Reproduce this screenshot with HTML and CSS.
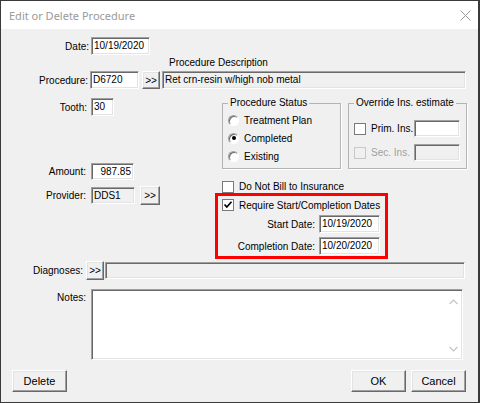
FILE: index.html
```html
<!DOCTYPE html>
<html lang="en">
<head>
  <meta charset="UTF-8" />
  <title>Edit or Delete Procedure</title>
  <link rel="stylesheet" href="styles.css">
</head>
<body>
  <div class="window">
    <!-- Title bar -->
    <div class="titlebar">
      <span class="title">Edit or Delete Procedure</span>
      <svg class="close" width="11" height="11" viewBox="0 0 11 11">
        <path d="M0.5 0.5 L10.5 10.5 M10.5 0.5 L0.5 10.5" stroke="#9a9a9a" stroke-width="1" fill="none" />
      </svg>
    </div>

    <div class="content">
      <div class="row row-date">
        <span class="lbl">Date:</span>
        <div class="field w-date">10/19/2020</div>
      </div>

      <div class="desc-caption">Procedure Description</div>
      <div class="row row-proc">
        <span class="lbl lbl-proc">Procedure:</span>
        <div class="field w-code">D6720</div>
        <div class="btn btn-pick">&gt;&gt;</div>
        <div class="field readonly w-desc">Ret crn-resin w/high nob metal</div>
      </div>

      <div class="mid">
        <div class="mid-left">
          <div class="row row-tooth">
            <span class="lbl lbl-tooth">Tooth:</span>
            <div class="field w-tooth">30</div>
          </div>
          <div class="row row-amount">
            <span class="lbl lbl-amount">Amount:</span>
            <div class="field w-amount">987.85</div>
          </div>
          <div class="row row-provider">
            <span class="lbl lbl-amount">Provider:</span>
            <div class="field readonly w-provider">DDS1</div>
            <div class="btn btn-prov">&gt;&gt;</div>
          </div>
        </div>

        <div class="mid-right">
          <div class="groups">
            <fieldset class="group group-status">
              <legend>Procedure Status</legend>
              <div class="radio-row"><span class="radio"></span>Treatment Plan</div>
              <div class="radio-row"><span class="radio on"></span>Completed</div>
              <div class="radio-row"><span class="radio"></span>Existing</div>
            </fieldset>
            <fieldset class="group group-override">
              <legend>Override Ins. estimate</legend>
              <div class="ins-row">
                <span class="chk"></span>Prim. Ins.
                <div class="field w-ins"></div>
              </div>
              <div class="ins-row disabled">
                <span class="chk"></span>Sec. Ins.
                <div class="field readonly w-ins"></div>
              </div>
            </fieldset>
          </div>

          <div class="check-row nobill"><span class="chk"></span>Do Not Bill to Insurance</div>

          <div class="highlight">
            <div class="check-row">
              <span class="chk">
                <svg width="10" height="10" viewBox="0 0 10 10">
                  <path d="M1.5 4.5 L3.8 7 L8.5 1.8" stroke="#000" stroke-width="1.7" fill="none" />
                </svg>
              </span>Require Start/Completion Dates
            </div>
            <div class="date-row">
              <span class="date-lbl">Start Date:</span>
              <div class="field w-date2">10/19/2020</div>
            </div>
            <div class="date-row">
              <span class="date-lbl">Completion Date:</span>
              <div class="field w-date2">10/20/2020</div>
            </div>
          </div>
        </div>
      </div>

      <div class="row row-diag">
        <span class="lbl lbl-diag">Diagnoses:</span>
        <div class="btn btn-diag">&gt;&gt;</div>
        <div class="field readonly w-diag"></div>
      </div>

      <div class="row row-notes">
        <span class="lbl lbl-notes">Notes:</span>
        <div class="field notes">
          <div class="notes-text"></div>
          <div class="scroll">
            <svg width="9" height="6" viewBox="0 0 9 6"><path d="M0.5 5 L4.5 1 L8.5 5" stroke="#c4c4c4" stroke-width="1.2" fill="none" /></svg>
            <svg width="9" height="6" viewBox="0 0 9 6"><path d="M0.5 1 L4.5 5 L8.5 1" stroke="#c4c4c4" stroke-width="1.2" fill="none" /></svg>
          </div>
        </div>
      </div>

      <div class="actions">
        <div class="btn btn-act">Delete</div>
        <div class="actions-right">
          <div class="btn btn-act">OK</div>
          <div class="btn btn-act">Cancel</div>
        </div>
      </div>
    </div>
  </div>
</body>
</html>
```

FILE: styles.css
```css
* { box-sizing: border-box; margin: 0; padding: 0; }
body {
  background: #f0f0f0;
  font-family: "Liberation Sans", Arial, sans-serif;
  font-size: 10px;
  color: #000;
}

/* Window frame */
.window {
  width: 480px;
  height: 403px;
  border: 1px solid #3a3a3a;
  border-right-width: 2px;
  background: #f0f0f0;
  display: flex;
  flex-direction: column;
}
.titlebar {
  height: 28px;
  background: #fff;
  display: flex;
  align-items: center;
  justify-content: space-between;
  padding: 0 7px 0 8px;
}
.title {
  font-family: "Noto Sans", "Open Sans", sans-serif;
  font-size: 11px;
  color: #9a9a9a;
}

/* Generic rows */
.content { display: flex; flex-direction: column; }
.row { display: flex; align-items: center; }
.lbl {
  width: 90px;
  padding-right: 2px;
  text-align: right;
  white-space: nowrap;
}
.lbl-proc { width: 89px; }
.lbl-tooth { padding-right: 4px; }
.lbl-amount { padding-right: 5px; }
.lbl-diag { width: 85px; padding-right: 3px; }
.lbl-notes { width: 90px; padding-right: 5px; align-self: flex-start; padding-top: 3px; }

/* Sunken edit box */
.field {
  height: 18px;
  line-height: 16px;
  padding: 0 2px;
  background: #fff;
  border: 1px solid;
  border-color: #a0a0a0 #fff #fff #a0a0a0;
  box-shadow: inset 1px 1px 0 #696969, inset -1px -1px 0 #e3e3e3;
  white-space: nowrap;
  overflow: hidden;
}
.field.readonly { background: #f0f0f0; }

/* Raised push button */
.btn {
  background: #f0f0f0;
  border: 1px solid;
  border-color: #fff #696969 #696969 #fff;
  box-shadow: inset -1px -1px 0 #a0a0a0, inset 1px 1px 0 #e3e3e3;
  display: flex;
  align-items: center;
  justify-content: center;
  font-size: 10px;
}

.row-date { margin-top: 8px; }
.w-date { width: 59px; }

.desc-caption {
  height: 16px;
  line-height: 16px;
  padding-left: 168px;
}
.w-code { width: 49px; }
.btn-pick { width: 18px; height: 18px; margin-left: 3px; }
.w-desc { width: 304px; margin-left: 2px; }

/* Middle section */
.mid {
  display: grid;
  grid-template-columns: 214px 1fr;
  margin-top: 8px;
}
.mid-left { display: flex; flex-direction: column; }
.row-tooth { margin-top: 1px; }
.w-tooth { width: 23px; }
.row-amount { margin-top: 47px; }
.w-amount { width: 43px; height: 17px; line-height: 15px; text-align: right; }
.row-provider { margin-top: 6px; height: 19px; }
.w-provider { width: 44px; height: 17px; line-height: 15px; }
.btn-prov { width: 20px; height: 19px; margin-left: 5px; }

.mid-right { display: flex; flex-direction: column; }
.groups { display: flex; gap: 7px; padding-left: 7px; }
.group {
  width: 119px;
  border: 1px solid #b4b4b4;
  box-shadow: 1px 1px 0 #fff;
  padding: 2px 6px 2px 5px;
  margin: 0;
  min-width: 0;
}
.group legend {
  padding: 0 2px;
  line-height: 12px;
}
.group-status { padding-bottom: 3px; }
.radio-row {
  height: 18px;
  display: flex;
  align-items: center;
}
.radio {
  width: 11px;
  height: 11px;
  border-radius: 50%;
  background: #fff;
  border: 1px solid;
  border-color: #a0a0a0 #fff #fff #a0a0a0;
  box-shadow: inset 1px 1px 0 #696969;
  margin-right: 5px;
  display: flex;
  align-items: center;
  justify-content: center;
}
.radio.on::after {
  content: "";
  width: 4px;
  height: 4px;
  border-radius: 50%;
  background: #000;
}

.group-override { padding-top: 11px; padding-bottom: 5px; }
.ins-row { display: flex; align-items: center; height: 17px; }
.ins-row + .ins-row { margin-top: 7px; }
.ins-row.disabled { color: #a0a0a0; }
.ins-row.disabled .chk { border-color: #c8c8c8; background: #f0f0f0; }
.w-ins { width: 46px; height: 17px; margin-left: auto; }

/* Checkboxes */
.chk {
  width: 12px;
  height: 12px;
  background: #fff;
  border: 1px solid #7a7a7a;
  margin-right: 5px;
  display: flex;
  align-items: center;
  justify-content: center;
  flex: none;
}
.check-row { display: flex; align-items: center; height: 18px; white-space: nowrap; }
.nobill { height: 13px; margin-top: 11px; padding-left: 7px; }

/* Red highlight */
.highlight {
  width: 173px;
  border: 3px solid #ff0000;
  padding: 0 5px 1px 4px;
}
.date-row {
  display: flex;
  align-items: center;
  justify-content: flex-end;
  margin-top: 1px;
}
.date-row + .date-row { margin-top: 4px; }
.date-lbl { margin-right: 4px; }
.w-date2 { width: 61px; }

/* Bottom rows */
.row-diag { margin-top: 2px; height: 19px; }
.btn-diag { width: 18px; height: 19px; }
.w-diag { width: 360px; height: 17px; margin-left: 1px; }

.row-notes { margin-top: 9px; align-items: flex-start; }
.notes {
  width: 372px;
  height: 71px;
  display: flex;
  padding: 0;
}
.notes-text { flex: 1; }
.scroll {
  width: 17px;
  display: flex;
  flex-direction: column;
  justify-content: space-between;
  align-items: center;
  padding: 9px 0 7px;
}

.actions {
  margin-top: 10px;
  display: flex;
  justify-content: space-between;
  padding: 0 12px 0 11px;
}
.actions-right { display: flex; gap: 5px; }
.btn-act { width: 55px; height: 22px; font-size: 11px; }
```
